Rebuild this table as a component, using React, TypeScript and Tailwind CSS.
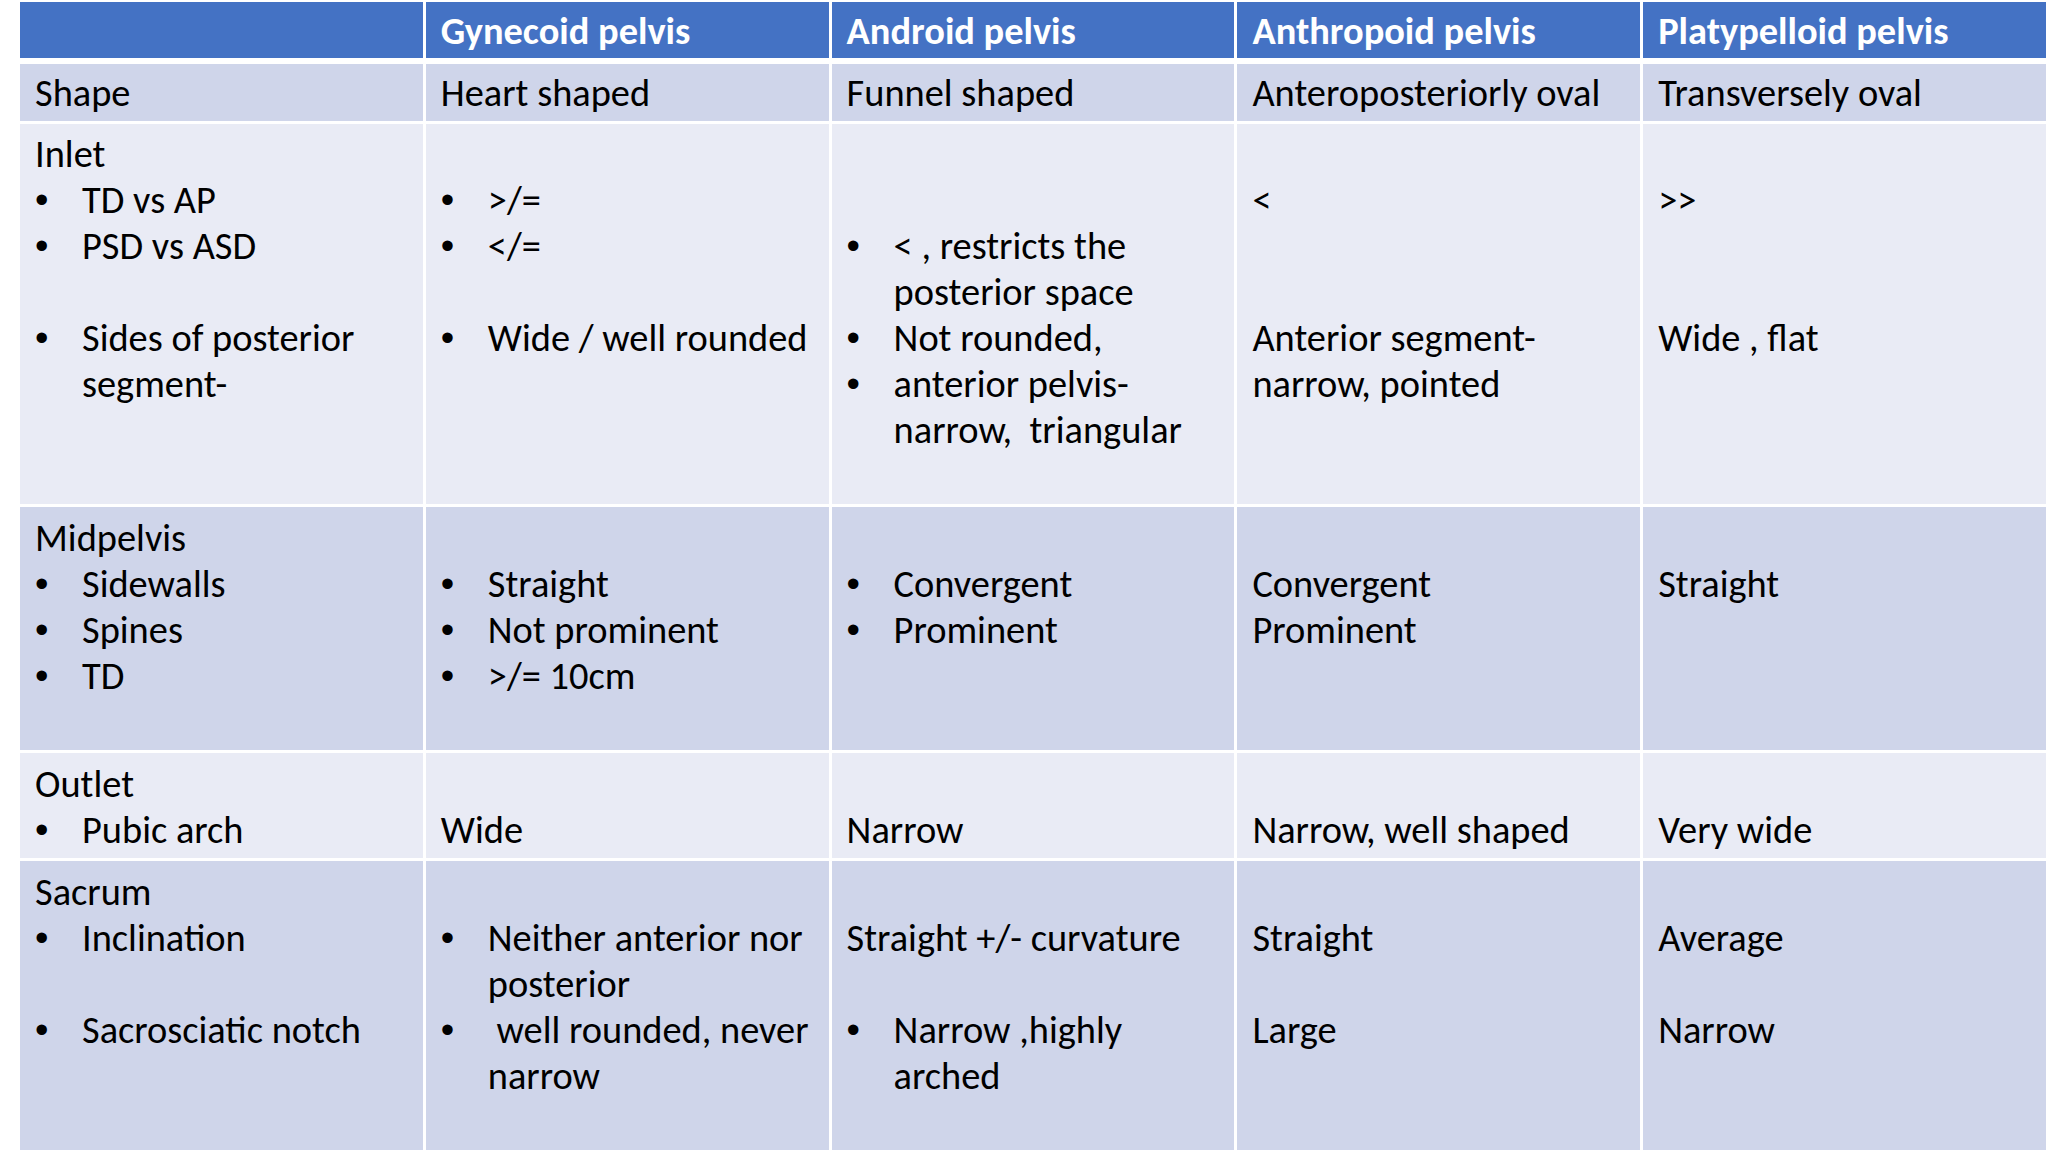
import React from "react";

type Line = { t: string; b?: boolean; i?: boolean };

const L = (t: string): Line => ({ t });
const B = (t: string): Line => ({ t, b: true });
const I = (t: string): Line => ({ t, i: true });
const E: Line = { t: "" };

const headers = ["", "Gynecoid pelvis", "Android pelvis", "Anthropoid pelvis", "Platypelloid pelvis"];

const rows: { h: string; bg: string; pt: string; cells: Line[][] }[] = [
  {
    h: "h-[57px]",
    bg: "bg-[#cfd5ea]",
    pt: "pt-[6px]",
    cells: [
      [L("Shape")],
      [L("Heart shaped")],
      [L("Funnel shaped")],
      [L("Anteroposteriorly oval")],
      [L("Transversely oval")],
    ],
  },
  {
    h: "h-[380px]",
    bg: "bg-[#e9ebf5]",
    pt: "pt-[7px]",
    cells: [
      [L("Inlet"), B("TD vs AP"), B("PSD vs ASD"), E, B("Sides of posterior"), I("segment-")],
      [E, B(">/="), B("</="), E, B("Wide / well rounded")],
      [E, E, B("< , restricts the"), I("posterior space"), B("Not rounded,"), B("anterior pelvis-"), I("narrow,\u00a0 triangular")],
      [E, L("<"), E, E, L("Anterior segment-"), L("narrow, pointed")],
      [E, L(">>"), E, E, L("Wide , flat")],
    ],
  },
  {
    h: "h-[243px]",
    bg: "bg-[#cfd5ea]",
    pt: "pt-[8px]",
    cells: [
      [L("Midpelvis"), B("Sidewalls"), B("Spines"), B("TD")],
      [E, B("Straight"), B("Not prominent"), B(">/= 10cm")],
      [E, B("Convergent"), B("Prominent")],
      [E, L("Convergent"), L("Prominent")],
      [E, L("Straight")],
    ],
  },
  {
    h: "h-[105px]",
    bg: "bg-[#e9ebf5]",
    pt: "pt-[8px]",
    cells: [
      [L("Outlet"), B("Pubic arch")],
      [E, L("Wide")],
      [E, L("Narrow")],
      [E, L("Narrow, well shaped")],
      [E, L("Very wide")],
    ],
  },
  {
    h: "h-[289px]",
    bg: "bg-[#cfd5ea]",
    pt: "pt-[8px]",
    cells: [
      [L("Sacrum"), B("Inclination"), E, B("Sacrosciatic notch")],
      [E, B("Neither anterior nor"), I("posterior"), B("\u00a0well rounded, never"), I("narrow")],
      [E, L("Straight +/- curvature"), E, B("Narrow ,highly"), I("arched")],
      [E, L("Straight"), E, L("Large")],
      [E, L("Average"), E, L("Narrow")],
    ],
  },
];

function Cell({ lines, bg, pt }: { lines: Line[]; bg: string; pt: string }) {
  return (
    <div className={`${bg} ${pt} pl-[15px] pr-[8px] overflow-hidden`}>
      {lines.map((ln, k) => {
        if (ln.b) {
          return (
            <div key={k} className="flex h-[46px] items-center whitespace-pre">
              <span className="w-[47px] shrink-0 font-[family-name:'Liberation_Sans',Arial,sans-serif]">•</span>
              <span>{ln.t}</span>
            </div>
          );
        }
        if (ln.i) {
          return (
            <div key={k} className="flex h-[46px] items-center whitespace-pre pl-[47px]">
              {ln.t}
            </div>
          );
        }
        return (
          <div key={k} className="flex h-[46px] items-center whitespace-pre">
            {ln.t}
          </div>
        );
      })}
    </div>
  );
}

export default function App() {
  return (
    <div className="w-[2048px] h-[1152px] bg-white pt-[2px] pl-[20px] font-[family-name:Carlito,Calibri,Lato,sans-serif] text-[38.4px] leading-[46px] text-black">
      <div className="w-[2026px] flex flex-col">
        <div className="grid grid-cols-5 gap-x-[3px] h-[56px]">
          {headers.map((h, k) => (
            <div key={k} className="bg-[#4472c4] pl-[15px] pt-[6px] font-bold text-white whitespace-pre flex items-start">
              <span className="h-[46px] flex items-center">{h}</span>
            </div>
          ))}
        </div>
        {rows.map((r, k) => (
          <div key={k} className={`grid grid-cols-5 gap-x-[3px] ${r.h} ${k === 0 ? "mt-[6px]" : "mt-[3px]"}`}>
            {r.cells.map((c, j) => (
              <Cell key={j} lines={c} bg={r.bg} pt={r.pt} />
            ))}
          </div>
        ))}
      </div>
    </div>
  );
}
